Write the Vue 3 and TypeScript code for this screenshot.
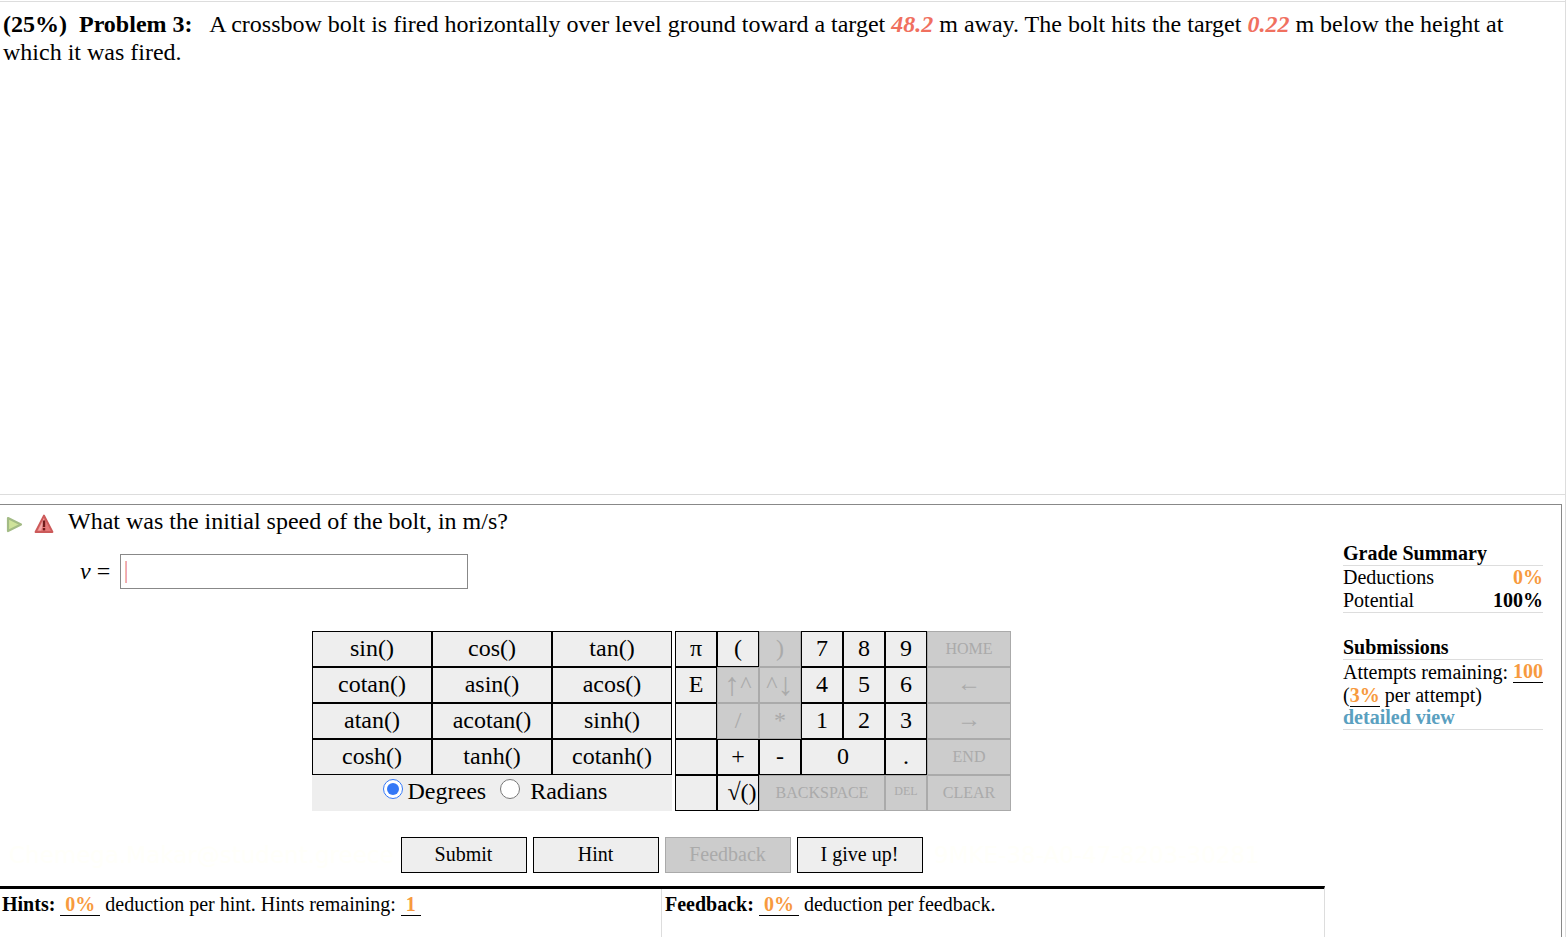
<script setup lang="ts">
interface Key { label: string; off?: boolean; span?: number; cls?: string; before?: string; after?: string }

const funcs: string[] = [
  'sin()', 'cos()', 'tan()',
  'cotan()', 'asin()', 'acos()',
  'atan()', 'acotan()', 'sinh()',
  'cosh()', 'tanh()', 'cotanh()',
]

const keys: Key[] = [
  { label: 'π' }, { label: '(' }, { label: ')', off: true }, { label: '7' }, { label: '8' }, { label: '9' }, { label: 'HOME', off: true, span: 2, cls: 'small' },
  { label: 'E' }, { label: '^', before: '↑', off: true }, { label: '^', after: '↓', off: true }, { label: '4' }, { label: '5' }, { label: '6' }, { label: '←', off: true, span: 2, cls: 'arr' },
  { label: '' }, { label: '/', off: true }, { label: '*', off: true }, { label: '1' }, { label: '2' }, { label: '3' }, { label: '→', off: true, span: 2, cls: 'arr' },
  { label: '' }, { label: '+' }, { label: '-' }, { label: '0', span: 2 }, { label: '.' }, { label: 'END', off: true, span: 2, cls: 'small' },
  { label: '' }, { label: '√()', cls: 'sqrt' }, { label: 'BACKSPACE', off: true, span: 3, cls: 'small' }, { label: 'DEL', off: true, cls: 'tiny' }, { label: 'CLEAR', off: true, span: 2, cls: 'small' },
]
</script>

<template>
  <div class="page">
    <section class="problem">
      <b>(25%)&nbsp; Problem 3:</b>&nbsp;&nbsp; A crossbow bolt is fired horizontally over level ground toward a target <b class="given">48.2</b> m away. The bolt hits the target <b class="given">0.22</b> m below the height at which it was fired.
    </section>

    <section class="part">
      <div class="main">
        <div class="question">
          <svg class="icons" width="54" height="20" viewBox="0 0 54 20">
            <path d="M8 4 L21 10.5 L8 17 Z" fill="#cfe39a" stroke="#a3bb85" stroke-width="2.2" stroke-linejoin="round" />
            <path d="M44 1.5 L52.5 18 L35.5 18 Z" fill="#e57878" stroke="#cc5a5a" stroke-width="1.8" stroke-linejoin="round" />
            <path d="M44 4 L38 16.5 L41 16.5 L44 8 Z" fill="#f2a8a8" />
            <rect x="42.8" y="6.5" width="2.4" height="6.5" fill="#701a1a" />
            <rect x="42.8" y="14" width="2.4" height="2.4" fill="#701a1a" />
          </svg>
          <span>What was the initial speed of the bolt, in m/s?</span>
        </div>

        <div class="answer">
          <span class="var"><i>v</i> =</span>
          <div class="field"><span class="caret"></span></div>
        </div>

        <div class="pad">
          <div class="func-col">
            <div class="funcs">
              <button v-for="f in funcs" :key="f" class="key" type="button">{{ f }}</button>
            </div>
            <div class="mode">
              <input class="radio" type="radio" name="mode" checked />
              <span class="deg">Degrees</span>
              <input class="radio rad" type="radio" name="mode" />
              <span>Radians</span>
            </div>
          </div>
          <div class="keys">
            <button
              v-for="(k, i) in keys"
              :key="i"
              type="button"
              class="key"
              :class="[k.cls, { off: k.off, s2: k.span === 2, s3: k.span === 3 }]"
            ><span v-if="k.before" class="arrow">{{ k.before }}</span>{{ k.label }}<span v-if="k.after" class="arrow">{{ k.after }}</span></button>
          </div>
        </div>

        <div class="actions">
          <span class="ghost left">Chemega.Makar@student.greece</span>
          <button class="act" type="button">Submit</button>
          <button class="act" type="button">Hint</button>
          <button class="act off" type="button">Feedback</button>
          <button class="act" type="button">I give up!</button>
          <span class="ghost right">9MKE-38-A0-47-8203-30281</span>
        </div>

        <div class="footer">
          <div class="foot-cell hints">
            <b>Hints:</b> <b class="pct">0%</b> deduction per hint. Hints remaining: <b class="pct one">1</b>
          </div>
          <div class="foot-cell fb">
            <b>Feedback:</b> <b class="pct">0%</b> deduction per feedback.
          </div>
        </div>
      </div>

      <aside class="side">
        <h4>Grade Summary</h4>
        <div class="row"><span>Deductions</span><b class="orange">0%</b></div>
        <div class="row last"><span>Potential</span><b>100%</b></div>

        <h4 class="second">Submissions</h4>
        <div class="row"><span>Attempts remaining:</span><b class="orange under">100</b></div>
        <div class="line">(<b class="orange under tight">3%</b> per attempt)</div>
        <div class="line last detail"><b class="link">detailed view</b></div>
      </aside>
    </section>
  </div>
</template>

<style>
html, body { margin: 0; background: #fff; overflow: hidden; }
</style>

<style scoped>
.page {
  width: 1566px;
  height: 937px;
  box-sizing: border-box;
  padding-top: 1px;
  border-right: 1px solid #ddd;
  overflow: hidden;
  font-family: "Liberation Serif", "Times New Roman", serif;
  color: #000;
}
.problem {
  height: 494px;
  box-sizing: border-box;
  border-top: 1px solid #ddd;
  border-bottom: 1px solid #ddd;
  padding: 8px 50px 0 3px;
  font-size: 24px;
  line-height: 28px;
}
.given { color: #f0705f; font-style: italic; }

.part {
  margin-top: 9px;
  margin-right: 3px;
  border-top: 1px solid #888;
  border-right: 1px solid #888;
  display: flex;
  height: 440px;
}
.main { width: 1325px; flex: none; }

.question {
  display: flex;
  align-items: flex-start;
  height: 34px;
  padding-top: 2px;
  box-sizing: border-box;
  font-size: 24px;
  line-height: 28px;
}
.icons { margin: 7px 14px 0 0; flex: none; }

.answer {
  display: flex;
  align-items: center;
  margin-top: 15px;
  height: 35px;
  padding-left: 80px;
  font-size: 24px;
}
.var { width: 40px; flex: none; }
.field {
  width: 348px;
  height: 35px;
  box-sizing: border-box;
  border: 1px solid #888;
  display: flex;
  align-items: center;
  padding-left: 4px;
}
.caret { width: 2px; height: 22px; background: linear-gradient(to right, #f3c49a, #ee9ac8); }

.pad {
  display: flex;
  justify-content: center;
  gap: 3px;
  margin-top: 42px;
  padding-right: 2px;
}
.func-col { width: 360px; flex: none; }
.funcs {
  display: grid;
  grid-template-columns: repeat(3, 120px);
  grid-auto-rows: 36px;
}
.keys {
  display: grid;
  grid-template-columns: repeat(8, 42px);
  grid-auto-rows: 36px;
}
.key {
  box-sizing: border-box;
  margin: 0;
  padding: 0 0 2px;
  border: 1px solid #000;
  border-radius: 0;
  background: #eee;
  color: #000;
  font: 24px/1 "Liberation Serif", "Times New Roman", serif;
  white-space: nowrap;
}
.key.off { background: #ccc; border-color: #aaa; color: #aaa; }
.key.small { font-size: 16px; padding-bottom: 1px; }
.key.tiny { font-size: 12px; padding-bottom: 4px; }
.key.arr { padding-bottom: 4px; }
.key.sqrt { padding-left: 8px; }
.arrow { font-size: 32px; line-height: 24px; vertical-align: -3px; }
.s2 { grid-column: span 2; }
.s3 { grid-column: span 3; }

.mode {
  height: 36px;
  background: #eee;
  display: flex;
  align-items: center;
  justify-content: center;
  font-size: 24px;
  padding: 0 0 4px 6px;
  box-sizing: border-box;
}
.radio { width: 20px; height: 20px; margin: 0 5px 5px 0; accent-color: #3478f6; }
.rad { margin-left: 14px; margin-right: 10px; }
.mode span { line-height: 30px; }

.actions {
  display: flex;
  justify-content: center;
  gap: 6px;
  margin-top: 26px;
  padding-right: 2px;
  position: relative;
}
.act {
  width: 126px;
  height: 36px;
  box-sizing: border-box;
  margin: 0;
  padding: 0 0 2px;
  border: 1px solid #000;
  border-radius: 0;
  background: #eee;
  color: #000;
  font: 20px/1 "Liberation Serif", "Times New Roman", serif;
  position: relative;
  z-index: 1;
}
.act.off { background: #ccc; border-color: #aaa; color: #aaa; }
.ghost {
  position: absolute;
  top: 0;
  font-family: "DejaVu Sans", sans-serif;
  font-size: 23px;
  line-height: 36px;
  color: #fffffa;
  white-space: nowrap;
  overflow: hidden;
}
.ghost.left { left: 9px; width: 384px; }
.ghost.right { left: 934px; }

.footer {
  display: flex;
  margin-top: 13px;
  border-top: 3px solid #000;
  border-right: 1px solid #ddd;
  height: 60px;
  font-size: 20px;
  line-height: 26px;
}
.foot-cell { box-sizing: border-box; padding: 2px 0 0 2px; }
.hints { width: 662px; border-right: 1px solid #ddd; }
.fb { padding-left: 3px; }
.pct {
  display: inline-block;
  min-width: 40px;
  text-align: center;
  line-height: 22px;
  border-bottom: 1px solid #000;
  color: #f79a3e;
}
.pct.one { min-width: 20px; }

.side {
  width: 200px;
  margin-left: 18px;
  padding-top: 38px;
  font-size: 20px;
  line-height: 23px;
}
.side h4 {
  margin: 0;
  padding-bottom: 1px;
  font-size: 20px;
  line-height: 21px;
  font-weight: bold;
  border-bottom: 1px solid #ddd;
}
.side h4.second { margin: 24px 0 1px; }
.row { display: flex; justify-content: space-between; white-space: nowrap; }
.last { border-bottom: 1px solid #ddd; }
.orange { color: #f79a3e; }
.under { border-bottom: 1px solid #000; line-height: 20px; height: 21px; }
.tight { display: inline-block; }
.link { color: #5aa0c0; }
.line { white-space: nowrap; }
.detail { line-height: 21px; padding-bottom: 1px; }
</style>
